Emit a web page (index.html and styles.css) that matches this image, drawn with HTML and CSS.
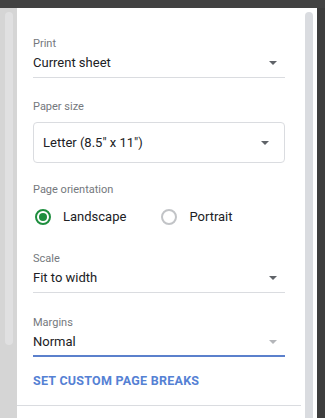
FILE: index.html
```html
<!DOCTYPE html>
<html>
<head>
<meta charset="utf-8">
<link rel="stylesheet" href="styles.css">
</head>
<body>
<div class="topbar"></div>
<div class="main">
  <div class="left">
    <div class="left-track"></div>
  </div>
  <div class="panel">
    <div class="content">
      <div class="field">
        <div class="label">Print</div>
        <div class="select">
          <span class="value">Current sheet</span>
          <span class="arrow"></span>
        </div>
      </div>

      <div class="field gap-22">
        <div class="label">Paper size</div>
        <div class="box">
          <span class="value">Letter (8.5" x 11")</span>
          <span class="arrow"></span>
        </div>
      </div>

      <div class="field gap-20">
        <div class="label">Page orientation</div>
        <div class="radios">
          <div class="radio-item">
            <span class="radio checked"></span>
            <span class="value">Landscape</span>
          </div>
          <div class="radio-item">
            <span class="radio"></span>
            <span class="value">Portrait</span>
          </div>
        </div>
      </div>

      <div class="field gap-25">
        <div class="label">Scale</div>
        <div class="select">
          <span class="value">Fit to width</span>
          <span class="arrow"></span>
        </div>
      </div>

      <div class="field gap-23">
        <div class="label">Margins</div>
        <div class="select focused">
          <span class="value">Normal</span>
          <span class="arrow light"></span>
        </div>
      </div>

      <div class="link">SET CUSTOM PAGE BREAKS</div>
      <div class="bottom-rule"></div>
    </div>
    <div class="scroll-track"></div>
  </div>
  <div class="right-edge"></div>
</div>
</body>
</html>
```

FILE: styles.css
```css
html, body {
  margin: 0;
  padding: 0;
}
body {
  width: 325px;
  height: 418px;
  overflow: hidden;
  background: #424242;
  font-family: Roboto, "Liberation Sans", Arial, sans-serif;
  color: #202124;
}
.topbar {
  height: 8px;
  background: #424242;
}
.main {
  display: flex;
  height: 410px;
}
.left {
  width: 17px;
  flex: none;
  background: #d5d5d5;
  padding-top: 4px;
  box-sizing: border-box;
}
.left-track {
  margin-left: 5px;
  width: 8px;
  height: 333px;
  border-radius: 4px;
  background: #e0e0e1;
}
.panel {
  width: 300px;
  flex: none;
  background: #ffffff;
  display: flex;
  padding-right: 4px;
  box-sizing: border-box;
}
.content {
  width: 288px;
  flex: none;
  box-sizing: border-box;
  padding: 29px 20px 0 16px;
}
.scroll-track {
  width: 8px;
  flex: none;
  margin-top: 4px;
  border-radius: 4px 4px 0 0;
  background: #dadce0;
}
.right-edge {
  flex: 1;
  background: #3d3d3d;
}
.field.gap-20 { margin-top: 20px; }
.field.gap-22 { margin-top: 22px; }
.field.gap-23 { margin-top: 23px; }
.field.gap-25 { margin-top: 25px; }
.label {
  font-size: 11px;
  line-height: 14px;
  color: #74787d;
}
.value {
  font-size: 13px;
  line-height: 20px;
  color: #202124;
  white-space: nowrap;
}
.select {
  margin-top: 2px;
  display: flex;
  align-items: center;
  justify-content: space-between;
  padding: 0 8px 4px 0;
  border-bottom: 1px solid #dadce0;
}
.select.focused {
  padding-bottom: 3px;
  border-bottom: 2px solid #5b80cc;
}
.arrow {
  width: 0;
  height: 0;
  border-left: 4px solid transparent;
  border-right: 4px solid transparent;
  border-top: 4px solid #5f6368;
}
.arrow.light {
  border-top-color: #b4b6ba;
}
.box {
  margin-top: 8px;
  height: 41px;
  box-sizing: border-box;
  border: 1px solid #dadce0;
  border-radius: 4px;
  display: flex;
  align-items: center;
  justify-content: space-between;
  padding: 0 15px 0 9px;
}
.radios {
  margin-top: 10px;
  height: 20px;
  display: flex;
  align-items: center;
  gap: 35px;
  padding-left: 2px;
}
.radio-item {
  display: flex;
  align-items: center;
  gap: 12px;
}
.radio {
  width: 16px;
  height: 16px;
  box-sizing: border-box;
  border-radius: 50%;
  border: 2px solid #c2c4c7;
  display: flex;
  align-items: center;
  justify-content: center;
}
.radio.checked {
  border-color: #1e8e3e;
}
.radio.checked::after {
  content: "";
  width: 8px;
  height: 8px;
  border-radius: 50%;
  background: #1e8e3e;
}
.link {
  margin-top: 14px;
  font-size: 12.5px;
  line-height: 20px;
  font-weight: 700;
  letter-spacing: 0.25px;
  color: #5581d4;
  white-space: nowrap;
}
.bottom-rule {
  margin-top: 14px;
  margin-left: -16px;
  width: 284px;
  height: 1px;
  background: #dadce0;
}
```
